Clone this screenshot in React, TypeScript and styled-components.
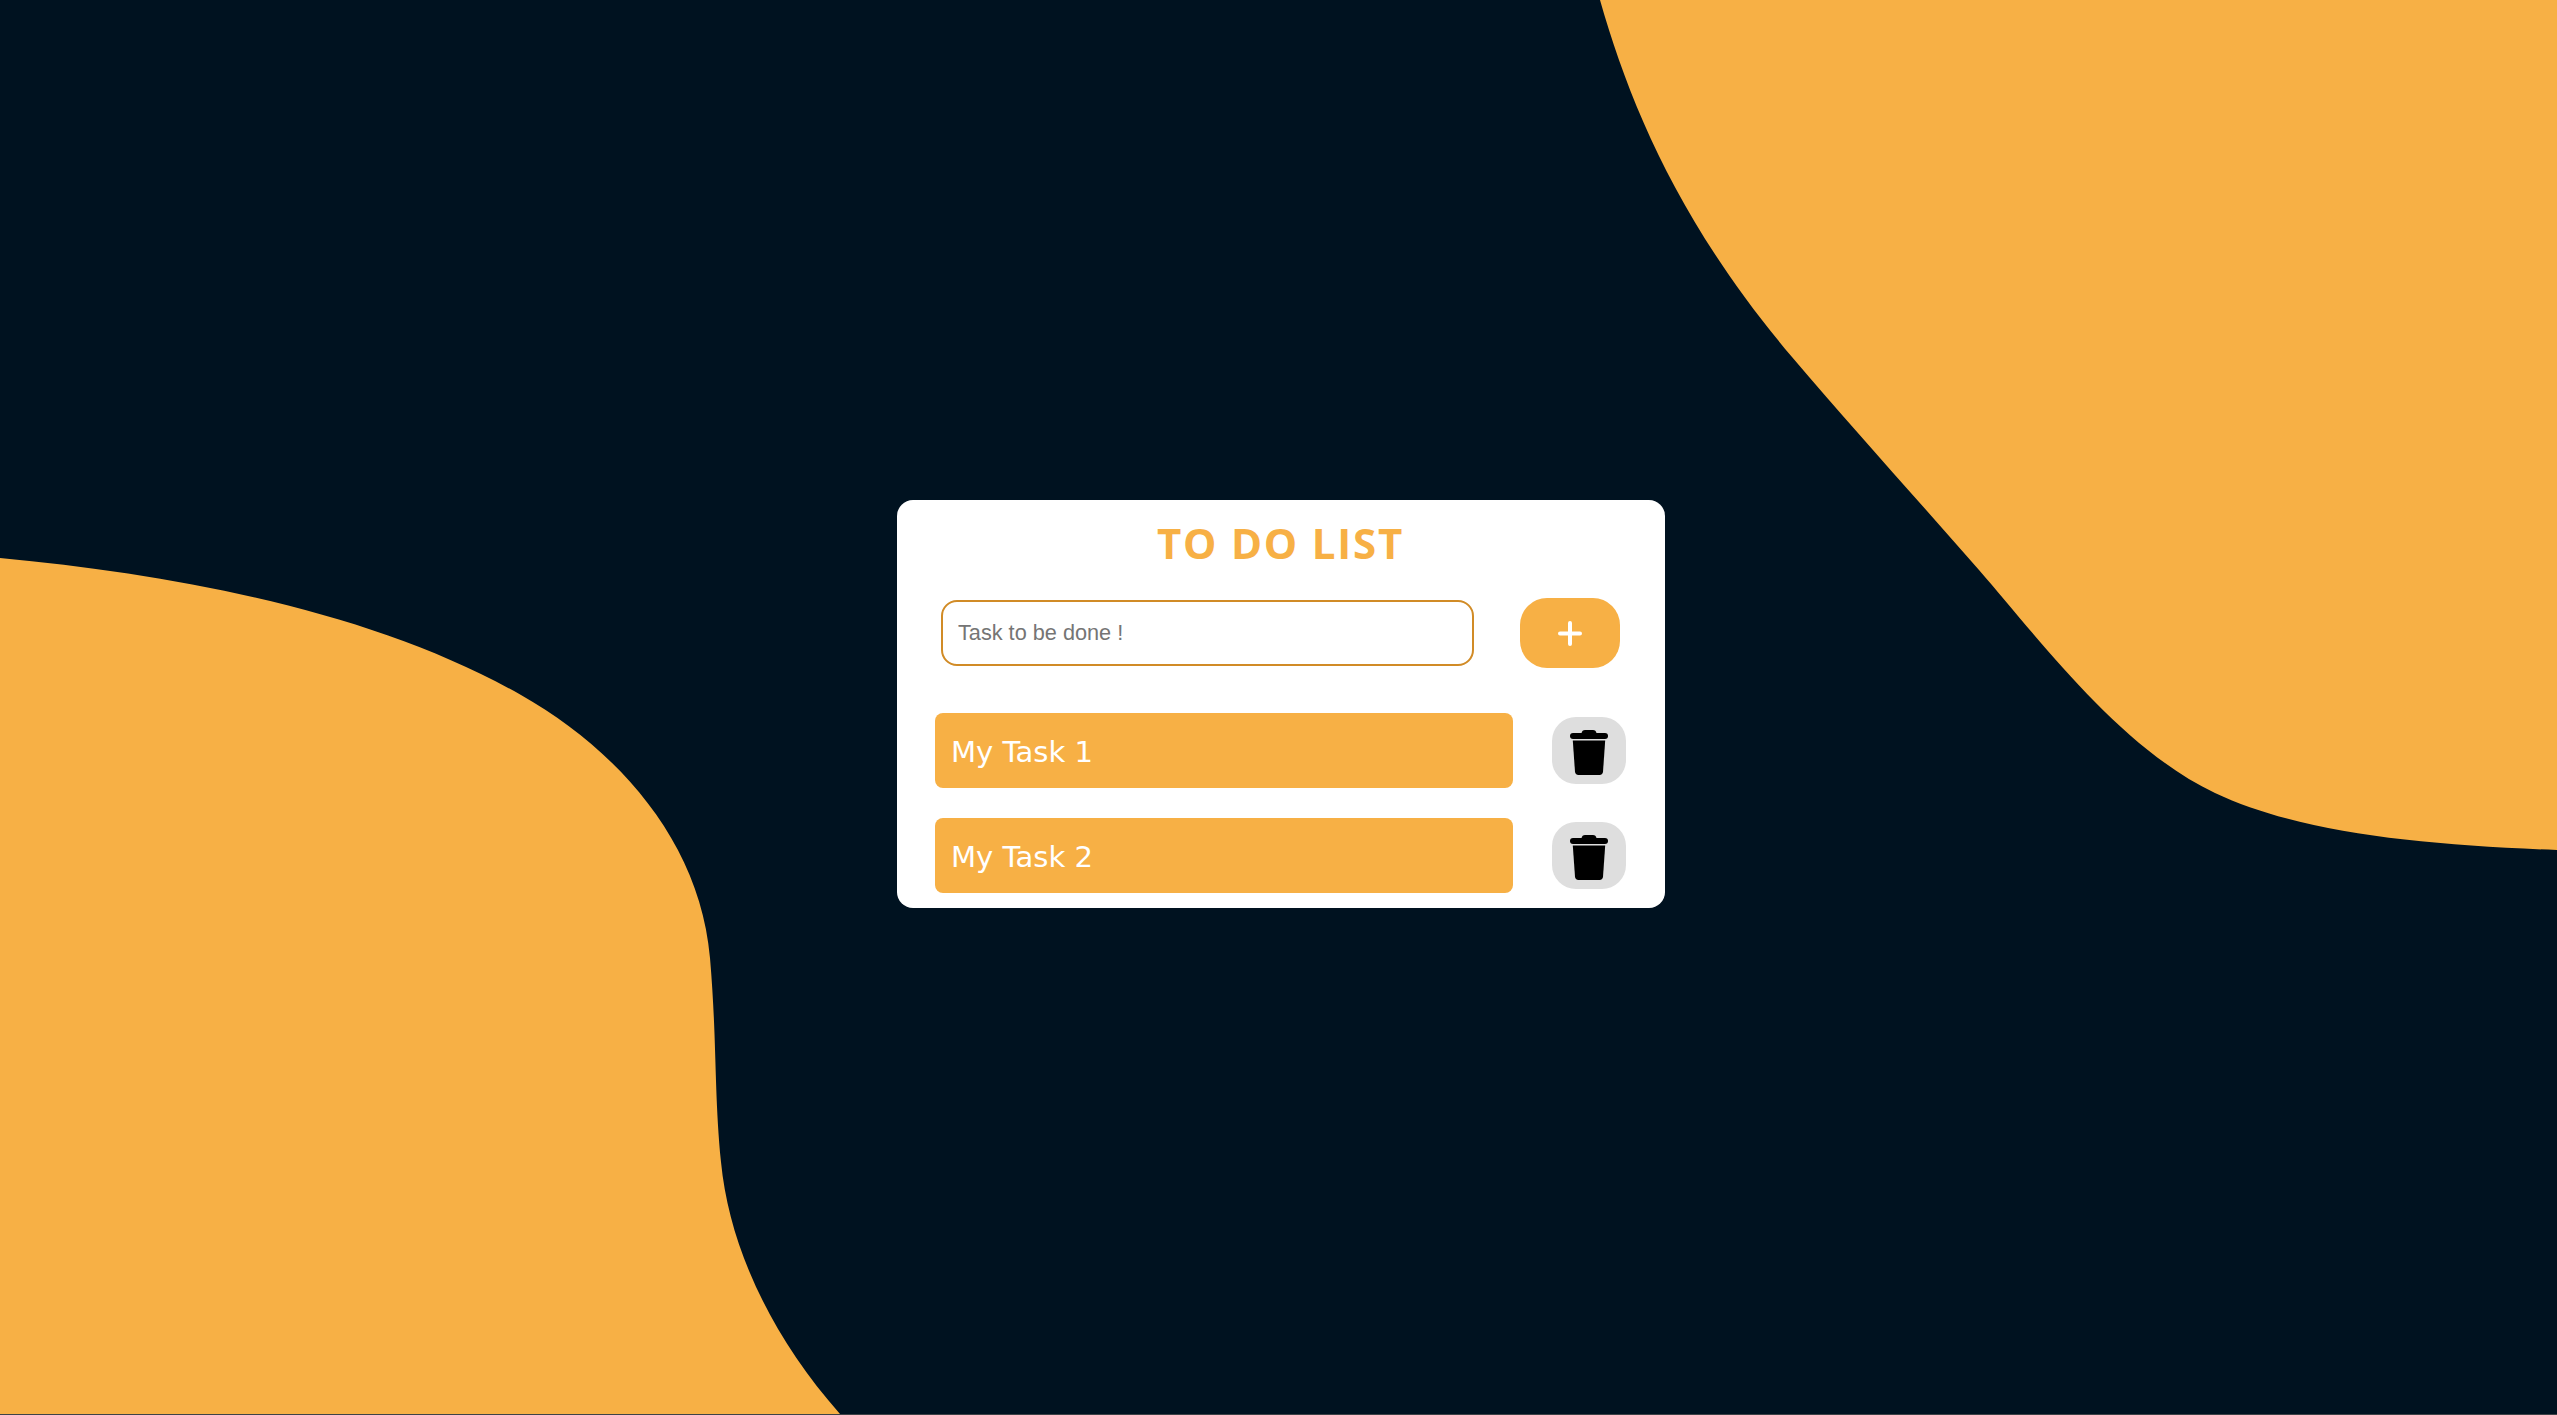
import React from "react";
import styled, { createGlobalStyle } from "styled-components";

const ORANGE = "#f7b045";
const NAVY = "#001220";

const GlobalStyle = createGlobalStyle`
  html, body { margin: 0; padding: 0; background: ${NAVY}; }
  * { box-sizing: border-box; }
`;

const Page = styled.main`
  position: relative;
  height: 1415px;
  overflow: hidden;
  display: grid;
  place-items: center;
  padding: 0 0 6px 5px;
  border-bottom: 1px solid #3d4246;
  background: ${NAVY};
`;

const Backdrop = styled.svg`
  position: absolute;
  inset: 0;
  width: 2557px;
  height: 1415px;
`;

const Card = styled.section`
  position: relative;
  width: 768px;
  height: 408px;
  padding: 0 39px 15px 38px;
  display: flex;
  flex-direction: column;
  background: #fff;
  border-radius: 16px;
`;

const Title = styled.h1`
  margin: 0 0 12px;
  height: 86px;
  line-height: 86px;
  text-align: center;
  font-family: "Comic Sans MS", "Open Sans", sans-serif;
  font-size: 42px;
  font-weight: 700;
  letter-spacing: 1.8px;
  color: ${ORANGE};
`;

const InputRow = styled.form`
  display: flex;
  align-items: center;
  justify-content: space-between;
  padding: 0 6px;
  margin: 0 0 45px;
`;

const TaskInput = styled.input`
  width: 533px;
  height: 66px;
  padding: 0 15px;
  border: 2px solid #d18b26;
  border-radius: 16px;
  outline: none;
  background: #fff;
  font-family: "Liberation Sans", Arial, sans-serif;
  font-size: 21.7px;
  &::placeholder { color: #757575; opacity: 1; }
`;

const AddButton = styled.button`
  width: 100px;
  height: 70px;
  padding: 0;
  display: flex;
  align-items: center;
  justify-content: center;
  border: none;
  border-radius: 27px;
  background: ${ORANGE};
`;

const TaskList = styled.ul`
  list-style: none;
  margin: 0;
  padding: 0;
  display: flex;
  flex-direction: column;
  gap: 30px;
`;

const TaskRow = styled.li`
  display: flex;
  align-items: center;
  justify-content: space-between;
`;

const TaskLabel = styled.div`
  width: 578px;
  height: 75px;
  padding: 2px 0 0 16px;
  display: flex;
  align-items: center;
  border-radius: 8px;
  background: ${ORANGE};
  color: #fff;
  font-family: "DejaVu Sans", Verdana, sans-serif;
  font-size: 29.1px;
`;

const DeleteButton = styled.button`
  width: 74px;
  height: 67px;
  padding: 3px 0 0;
  display: flex;
  align-items: center;
  justify-content: center;
  border: none;
  border-radius: 24px;
  background: #dedede;
`;

const TOP_RIGHT =
  "M1600 0C1630 105 1680 225 1792 357C1855 431 1917 499 1979 570C2040 640 2120 748 2215 793C2300 833 2420 845 2557 850L2557 0Z";
const BOTTOM_LEFT =
  "M0 558C180 575 375 612 521 695C615 748 700 840 710 958C717 1040 714 1090 721 1162C729 1245 770 1335 840 1414L0 1414Z";

const Blobs = () => (
  <Backdrop viewBox="0 0 2557 1415" aria-hidden="true">
    <path d={TOP_RIGHT} fill={ORANGE} />
    <path d={BOTTOM_LEFT} fill={ORANGE} />
  </Backdrop>
);

const PlusIcon = () => (
  <svg width="24" height="25" viewBox="0 0 24 25">
    <path d="M12 2V23M2 12.5H22" stroke="#fff" strokeWidth="4" strokeLinecap="round" fill="none" />
  </svg>
);

const TrashIcon = () => (
  <svg width="38" height="45" viewBox="0 0 38 45">
    <path d="M11.5 3.2C12 1 13 0 15 0H23C25 0 26 1 26.5 3.2Z" fill="#000" />
    <rect x="0" y="3" width="38" height="6" rx="3" fill="#000" />
    <path d="M2.8 10.5H35.2L33 41.8C32.8 43.8 31.6 45 29.6 45H8.4C6.4 45 5.2 43.8 5 41.8Z" fill="#000" />
  </svg>
);

const tasks = ["My Task 1", "My Task 2"];

export default function App() {
  return (
    <>
      <GlobalStyle />
      <Page>
        <Blobs />
        <Card>
          <Title>TO DO LIST</Title>
          <InputRow onSubmit={(e) => e.preventDefault()}>
            <TaskInput type="text" placeholder="Task to be done !" />
            <AddButton type="submit" aria-label="Add task">
              <PlusIcon />
            </AddButton>
          </InputRow>
          <TaskList>
            {tasks.map((task) => (
              <TaskRow key={task}>
                <TaskLabel>{task}</TaskLabel>
                <DeleteButton type="button" aria-label={`Delete ${task}`}>
                  <TrashIcon />
                </DeleteButton>
              </TaskRow>
            ))}
          </TaskList>
        </Card>
      </Page>
    </>
  );
}
